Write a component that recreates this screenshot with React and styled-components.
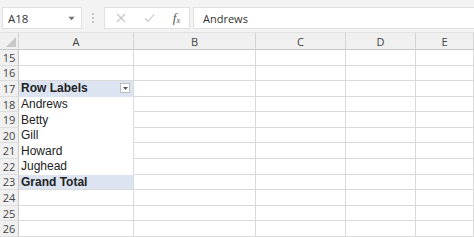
import React from "react";
import styled, { createGlobalStyle } from "styled-components";

const GlobalStyle = createGlobalStyle`
  html, body { margin: 0; padding: 0; background: #ffffff; }
  body { font-family: "Liberation Sans", Arial, sans-serif; overflow: hidden; }
`;

const COLS = ["A", "B", "C", "D", "E"];
const ROWS = [
  { n: 15 },
  { n: 16 },
  { n: 17, text: "Row Labels", bold: true, pivotHead: true },
  { n: 18, text: "Andrews", pivot: true },
  { n: 19, text: "Betty", pivot: true },
  { n: 20, text: "Gill", pivot: true },
  { n: 21, text: "Howard", pivot: true },
  { n: 22, text: "Jughead", pivot: true },
  { n: 23, text: "Grand Total", bold: true, pivotTotal: true },
  { n: 24 },
  { n: 25 },
  { n: 26 },
];

export default function App() {
  return (
    <>
      <GlobalStyle />
      <Page>
        <Toolbar>
          <NameBox>
            <span>A18</span>
            <Caret viewBox="0 0 8 5">
              <path d="M0.5 0.5 L7.5 0.5 L4 4.5 Z" fill="#707070" />
            </Caret>
          </NameBox>
          <Grip>
            <i />
            <i />
            <i />
          </Grip>
          <FxBox>
            <svg width="10" height="10" viewBox="0 0 10 10">
              <path d="M1 1 L9 9 M9 1 L1 9" stroke="#c4c4c4" strokeWidth="1.1" fill="none" />
            </svg>
            <svg width="11" height="10" viewBox="0 0 11 10">
              <path d="M1 5.5 L4 8.5 L10 1.5" stroke="#c4c4c4" strokeWidth="1.1" fill="none" />
            </svg>
            <FxLabel>
              f<sub>x</sub>
            </FxLabel>
          </FxBox>
          <FormulaBox>Andrews</FormulaBox>
        </Toolbar>
        <Sheet>
          <Corner>
            <svg width="10" height="10" viewBox="0 0 10 10">
              <path d="M10 0 L10 10 L0 10 Z" fill="#c8c8c8" />
            </svg>
          </Corner>
          {COLS.map((c) => (
            <ColHead key={c}>{c}</ColHead>
          ))}
          {ROWS.map((r) => (
            <React.Fragment key={r.n}>
              <RowHead>{r.n}</RowHead>
              <Cell
                $blue={r.pivotHead || r.pivotTotal}
                $bold={r.bold}
                $noLine={r.pivot || r.pivotHead}
              >
                {r.text}
                {r.pivotHead && (
                  <FilterBtn>
                    <svg width="5" height="3" viewBox="0 0 5 3">
                      <path d="M0 0 L5 0 L2.5 3 Z" fill="#555" />
                    </svg>
                  </FilterBtn>
                )}
              </Cell>
              <Cell />
              <Cell />
              <Cell />
              <Cell />
            </React.Fragment>
          ))}
        </Sheet>
      </Page>
    </>
  );
}

const Page = styled.div`
  width: 474px;
  height: 237px;
  overflow: hidden;
  background: #ffffff;
`;

const Toolbar = styled.div`
  height: 33px;
  box-sizing: border-box;
  padding: 7px 0 0 2px;
  display: flex;
  align-items: flex-start;
  background: #f3f3f3;
  border-bottom: 1px solid #e2e2e2;
  font-family: "Open Sans", "Noto Sans", sans-serif;
`;

const Box = styled.div`
  height: 22px;
  box-sizing: border-box;
  background: #ffffff;
  border: 1px solid #e0e0e0;
  display: flex;
  align-items: center;
`;

const NameBox = styled(Box)`
  width: 80px;
  padding: 0 6px 0 5px;
  justify-content: space-between;
  font-size: 11.5px;
  color: #333;
`;

const Caret = styled.svg`
  width: 7px;
  height: 5px;
`;

const Grip = styled.div`
  width: 22px;
  height: 22px;
  display: flex;
  flex-direction: column;
  align-items: center;
  justify-content: center;
  gap: 2px;
  i {
    width: 2px;
    height: 2px;
    background: #c6c6c6;
  }
`;

const FxBox = styled(Box)`
  width: 86px;
  padding: 0 9px 0 11px;
  justify-content: space-between;
`;

const FxLabel = styled.span`
  font-family: "Liberation Serif", serif;
  font-style: italic;
  font-size: 13px;
  color: #555;
  sub {
    font-size: 8px;
    vertical-align: -1px;
  }
`;

const FormulaBox = styled(Box)`
  margin-left: 3px;
  flex: 1;
  padding-left: 9px;
  border-right: none;
  font-size: 11px;
  color: #333;
`;

const Sheet = styled.div`
  display: grid;
  grid-template-columns: 19px 115px 122px 90px 70px 58px;
  grid-template-rows: 17px repeat(12, 15.58px);
`;

const Corner = styled.div`
  background: #f0f0f0;
  border-right: 1px solid #d4d4d4;
  border-bottom: 1px solid #c9c9c9;
  display: flex;
  align-items: flex-end;
  justify-content: flex-end;
  padding: 0 2px 2px 0;
`;

const ColHead = styled.div`
  background: #f0f0f0;
  border-right: 1px solid #d4d4d4;
  border-bottom: 1px solid #c9c9c9;
  font-size: 11px;
  color: #444;
  display: flex;
  align-items: center;
  justify-content: center;
  padding-top: 1px;
  font-family: "Open Sans", "Noto Sans", sans-serif;
`;

const RowHead = styled.div`
  background: #f0f0f0;
  border-right: 1px solid #c9c9c9;
  border-bottom: 1px solid #dedede;
  font-size: 11px;
  color: #444;
  display: flex;
  align-items: center;
  justify-content: center;
  font-family: "Open Sans", "Noto Sans", sans-serif;
`;

const Cell = styled.div`
  position: relative;
  box-sizing: border-box;
  border-right: 1px solid #dadada;
  border-bottom: 1px solid ${(p) => (p.$noLine ? "transparent" : "#dadada")};
  background: ${(p) => (p.$blue ? "#dce4f2" : "#ffffff")};
  font-size: 12px;
  font-weight: ${(p) => (p.$bold ? 700 : 400)};
  color: #222;
  padding-left: 2px;
  display: flex;
  align-items: center;
  white-space: nowrap;
  overflow: hidden;
`;

const FilterBtn = styled.span`
  position: absolute;
  right: 3px;
  top: 2px;
  width: 10px;
  height: 10px;
  box-sizing: border-box;
  background: #ffffff;
  border: 1px solid #bdbdbd;
  display: flex;
  align-items: center;
  justify-content: center;
`;
